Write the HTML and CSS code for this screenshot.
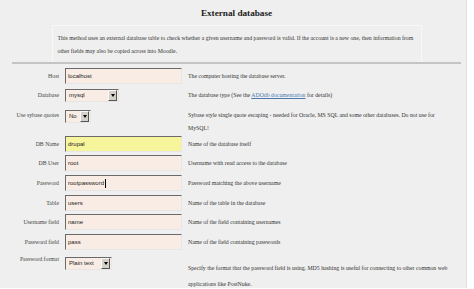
FILE: index.html
```html
<!doctype html>
<html><head>
<title>External database</title>
<link rel="stylesheet" href="styles.css">
</head>
<body>
<div class="panel">
	<h2 class="title">External database</h2>
	<div class="intro">This method uses an external database table to check whether a given username and password is valid.  If the account is a new one, then information from other fields may also be copied across into Moodle.</div>
	<hr class="rule">

	<div class="row">
		<div class="label">Host</div>
		<div class="field"><span class="input">localhost</span></div>
		<div class="desc">The computer hosting the database server.</div>
	</div>
	<div class="row">
		<div class="label">Database</div>
		<div class="field"><span class="select w-db"><span class="value">mysql</span><span class="arrow"></span></span></div>
		<div class="desc">The database type (See the <a href="#">ADOdb documentation</a> for details)</div>
	</div>
	<div class="row tall">
		<div class="label">Use sybase quotes</div>
		<div class="field"><span class="select w-no"><span class="value">No</span><span class="arrow"></span></span></div>
		<div class="desc">Sybase style single quote escaping - needed for Oracle, MS SQL and some other databases. Do not use for MySQL!</div>
	</div>
	<div class="row">
		<div class="label">DB Name</div>
		<div class="field"><span class="input hilite">drupal</span></div>
		<div class="desc">Name of the database itself</div>
	</div>
	<div class="row">
		<div class="label">DB User</div>
		<div class="field"><span class="input">root</span></div>
		<div class="desc">Username with read access to the database</div>
	</div>
	<div class="row">
		<div class="label">Password</div>
		<div class="field"><span class="input">rootpassword<span class="caret"></span></span></div>
		<div class="desc">Password matching the above username</div>
	</div>
	<div class="row">
		<div class="label">Table</div>
		<div class="field"><span class="input">users</span></div>
		<div class="desc">Name of the table in the database</div>
	</div>
	<div class="row">
		<div class="label">Username field</div>
		<div class="field"><span class="input">name</span></div>
		<div class="desc">Name of the field containing usernames</div>
	</div>
	<div class="row">
		<div class="label">Password field</div>
		<div class="field"><span class="input">pass</span></div>
		<div class="desc">Name of the field containing passwords</div>
	</div>
	<div class="row last">
		<div class="label">Password format</div>
		<div class="field"><span class="select w-fmt"><span class="value">Plain text</span><span class="arrow"></span></span></div>
		<div class="desc">Specify the format that the password field is using. MD5 hashing is useful for connecting to other common web applications like PostNuke.</div>
	</div>
</div>
</body></html>
```

FILE: styles.css
```css
body {
	margin: 0;
	background-color: #fff;
	font-family: "Liberation Serif", serif;
}
.panel {
	width: 459px;
	height: 288px;
	padding-left: 7px;
	background-color: #efefef;
	border-right: 1px solid #e2e2e2;
	overflow: hidden;
}
.title {
	margin: 0 0 6px 0;
	padding-top: 8px;
	font-size: 9.2px;
	line-height: 11px;
	text-align: center;
	color: #222;
}
.intro {
	width: 358px;
	margin: 0 auto;
	padding: 5.5px 5px 4.5px 5px;
	border: 1px solid #f8f8f8;
	border-bottom: none;
	font-size: 5.8px;
	line-height: 13px;
	color: #333;
}
.rule {
	height: 2px;
	margin: 0 5px 2px 5px;
	border: 0;
	background-color: #c4c4c4;
}
.row {
	display: grid;
	grid-template-columns: 52px 117px 266px;
	column-gap: 6px;
	align-items: center;
	height: 19.6px;
	font-size: 5.8px;
}
.label {
	text-align: right;
	color: #444;
}
.desc {
	color: #333;
}
.desc a {
	color: #4a79b0;
}
.input {
	display: block;
	height: 16px;
	box-sizing: border-box;
	padding-left: 2px;
	border: 1px solid;
	border-color: #6a6a6a #e6e6e6 #e6e6e6 #6a6a6a;
	background-color: #f8ece4;
	font-family: "Liberation Sans", sans-serif;
	font-size: 6px;
	line-height: 14px;
	color: #222;
}
.input.hilite {
	background-color: #f7f59c;
}
.caret {
	display: inline-block;
	width: 1px;
	height: 9px;
	margin-left: 1px;
	background-color: #000;
	vertical-align: middle;
}
.select {
	display: flex;
	align-items: center;
	height: 13px;
	box-sizing: border-box;
	border: 1px solid;
	border-color: #6a6a6a #e6e6e6 #e6e6e6 #6a6a6a;
	background-color: #f8ece4;
	font-family: "Liberation Sans", sans-serif;
	font-size: 6px;
	color: #222;
}
.select .value {
	flex: 1;
	padding-left: 3px;
}
.select .arrow {
	display: flex;
	align-items: center;
	justify-content: center;
	width: 7px;
	height: 9px;
	margin-right: 1px;
	border: 1px solid;
	border-color: #fafafa #555 #555 #fafafa;
	background-color: #d4d1cb;
}
.select .arrow::after {
	content: "";
	border-left: 2px solid transparent;
	border-right: 2px solid transparent;
	border-top: 3px solid #000;
}
.w-db { width: 54px; }
.w-no { width: 26px; }
.w-fmt { width: 47px; }

.row.tall {
	height: 28.8px;
	align-items: start;
}
.row.tall .label {
	margin-top: 2px;
	line-height: 16px;
}
.row.tall .field {
	margin-top: 4.6px;
}
.row.tall .desc {
	margin-top: 4px;
	line-height: 12.5px;
}
.row.last {
	height: 36px;
	align-items: start;
}
.row.last .label {
	line-height: 14px;
}
.row.last .field {
	margin-top: 5px;
}
.row.last .desc {
	padding-top: 8px;
	line-height: 16px;
}
```
